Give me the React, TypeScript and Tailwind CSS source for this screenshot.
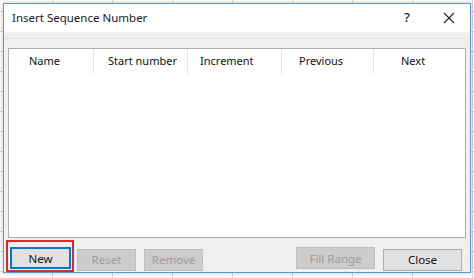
import React from 'react';

const font = { fontFamily: '"Noto Sans", "Open Sans", sans-serif' };

const columns = [
  { label: 'Name', w: 'w-[85px] pl-[20px]' },
  { label: 'Start number', w: 'w-[94px] pl-[14px]' },
  { label: 'Increment', w: 'w-[94px] pl-[12px]' },
  { label: 'Previous', w: 'w-[92px] pl-[17px]' },
  { label: 'Next', w: 'flex-1 pl-[27px]' },
];

function Btn({ label, disabled, w }: { label: string; disabled?: boolean; w: string }) {
  return (
    <button
      className={`${w} h-[22px] text-[11.5px] border ${
        disabled ? 'bg-[#cccccc] border-[#bfbfbf] text-[#9d9d9d]' : 'bg-[#e1e1e1] border-[#adadad] text-[#111]'
      }`}
    >
      {label}
    </button>
  );
}

export default function App() {
  return (
    <div
      className="w-[474px] h-[278px] overflow-hidden bg-white bg-[linear-gradient(to_right,#d6d6d6_1px,transparent_1px),linear-gradient(to_bottom,#d6d6d6_1px,transparent_1px)] bg-[size:60px_20px] bg-[position:52px_11px] pt-[3px] pl-[3px]"
      style={font}
    >
      <div className="w-[468px] h-[270px] border border-[#5b9bd5] bg-[#f0f0f0] flex flex-col shadow-[0_0_4px_rgba(0,0,0,0.25)]">
        {/* Title bar */}
        <div className="h-[28px] bg-white flex items-center pl-[8px] text-[11.5px] text-[#1a1a1a]">
          <span className="flex-1">Insert Sequence Number</span>
          <span className="w-[14px] text-center mr-[29px] text-[13px] font-medium">?</span>
          <svg width="12" height="12" viewBox="0 0 12 12" className="mr-[15px]">
            <path d="M1 1 L11 11 M11 1 L1 11" stroke="#222" strokeWidth="1.1" />
          </svg>
        </div>

        <div className="flex-1 flex flex-col pt-[6px] px-[4px]">
          <div className="h-px bg-[#e2e2e2] -mx-[4px] mb-[9px]" />
          {/* List */}
          <div className="h-[190px] bg-white border border-[#adadad]">
            <div className="flex h-[25px] text-[11px] text-[#111]">
              {columns.map((c, i) => (
                <div
                  key={c.label}
                  className={`${c.w} flex items-center ${i < columns.length - 1 ? 'border-r border-[#e5e5e5]' : ''}`}
                >
                  {c.label}
                </div>
              ))}
            </div>
          </div>

          {/* Buttons */}
          <div className="relative flex items-center mt-[8px] pl-[2px] pr-[4px]">
            <button className="w-[61px] h-[22px] text-[11.5px] bg-[#e1e1e1] border-2 border-[#0078d7] text-[#111]">
              New
            </button>
            <div className="absolute left-[-2px] top-[-6px] w-[68px] h-[32px] border-2 border-[#e3262b]" />
            <div className="ml-[6px]">
              <Btn label="Reset" disabled w="w-[59px]" />
            </div>
            <div className="ml-[8px]">
              <Btn label="Remove" disabled w="w-[59px]" />
            </div>
            <div className="flex-1" />
            <Btn label="Fill Range" disabled w="w-[79px]" />
            <div className="ml-[8px]">
              <Btn label="Close" w="w-[79px]" />
            </div>
          </div>
        </div>
      </div>
    </div>
  );
}
